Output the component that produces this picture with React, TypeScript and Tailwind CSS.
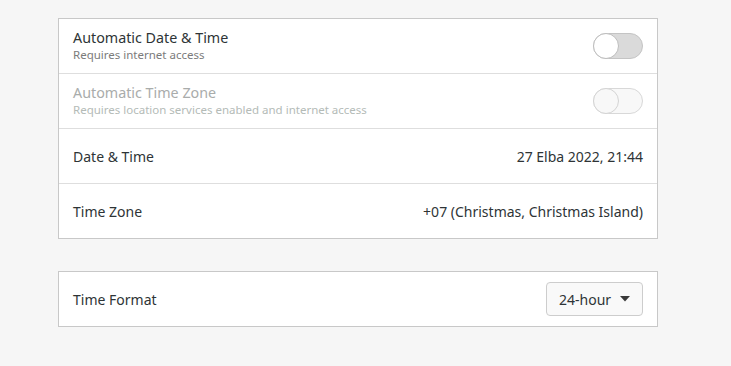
const font = { fontFamily: '"Noto Sans", "Open Sans", sans-serif' }

const Switch = ({ disabled = false }: { disabled?: boolean }) => (
  <div
    className={`relative h-[26px] w-[50px] rounded-full border ${
      disabled ? 'border-[#d8d8d8] bg-[#f8f8f8]' : 'border-[#c4c4c4] bg-[#dadada]'
    }`}
  >
    <div
      className={`absolute -left-px -top-px h-[26px] w-[26px] rounded-full border ${
        disabled ? 'border-[#d4d4d4] bg-[#f8f8f8]' : 'border-[#bdbdbd] bg-white'
      }`}
    />
  </div>
)

const Row = ({ children, last = false }: { children: React.ReactNode; last?: boolean }) => (
  <div
    className={`flex items-center justify-between pl-[14px] pr-[14px] ${
      last ? 'h-[54px]' : 'h-[55px] border-b border-[#dedede]'
    }`}
  >
    {children}
  </div>
)

export default function App() {
  return (
    <div className="min-h-[366px] w-full bg-[#f6f6f6] pt-[18px]" style={font}>
      <div className="ml-[58px] flex w-[600px] flex-col gap-[32px]">
        <div className="flex flex-col border border-[#c8c8c8] bg-white">
          <Row>
            <div className="flex flex-col pb-[1px]">
              <span className="text-[14.3px] leading-[18px] text-[#2e3436]">Automatic Date &amp; Time</span>
              <span className="text-[11.5px] leading-[15px] text-[#7b7b7b]">Requires internet access</span>
            </div>
            <Switch />
          </Row>
          <Row>
            <div className="flex flex-col pb-[1px]">
              <span className="text-[14.3px] leading-[18px] text-[#a9acab]">Automatic Time Zone</span>
              <span className="text-[11.5px] leading-[15px] text-[#b4bbb7]">
                Requires location services enabled and internet access
              </span>
            </div>
            <Switch disabled />
          </Row>
          <Row>
            <span className="text-[14px] text-[#2e3436]">Date &amp; Time</span>
            <span className="text-[14px] text-[#2e3436]">27 Elba 2022, 21:44</span>
          </Row>
          <Row last>
            <span className="text-[14px] text-[#2e3436]">Time Zone</span>
            <span className="text-[14px] text-[#2e3436]">+07 (Christmas, Christmas Island)</span>
          </Row>
        </div>
        <div className="flex flex-col border border-[#c8c8c8] bg-white">
          <Row last>
            <span className="text-[14px] text-[#2e3436]">Time Format</span>
            <button className="flex h-[34px] w-[97px] items-center justify-between rounded-[4px] border border-[#cdcdcd] bg-[#f9f9f9] pl-[12px] pr-[12px] text-[14px] text-[#2e3436]">
              <span>24-hour</span>
              <svg width="10" height="6" viewBox="0 0 10 6">
                <path d="M0 0h10L5 5.5z" fill="#3a3a3a" />
              </svg>
            </button>
          </Row>
        </div>
      </div>
    </div>
  )
}
